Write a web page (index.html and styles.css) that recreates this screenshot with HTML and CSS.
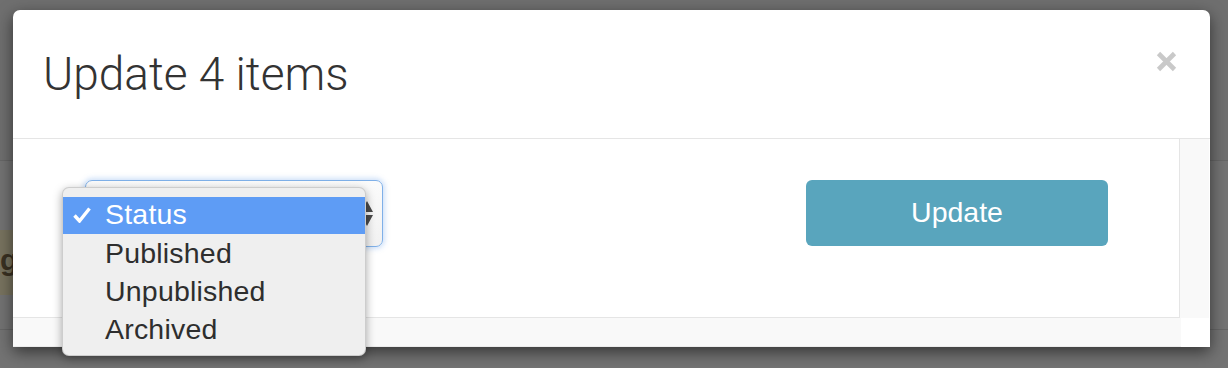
FILE: index.html
```html
<!DOCTYPE html>
<html>
<head>
<meta charset="utf-8">
<link rel="stylesheet" href="styles.css">
</head>
<body>
<div class="page">
  <div class="page-top"></div>
  <div class="page-mid"><span class="tag">g</span></div>
  <div class="page-low"></div>
</div>

<div class="modal">
  <div class="modal-header">
    <h4 class="modal-title">Update 4 items</h4>
    <button class="close" aria-label="Close">
      <svg width="21" height="21" viewBox="0 0 21 21"><path d="M2.5 2.5 L18.5 18.5 M18.5 2.5 L2.5 18.5" stroke="#c9c9c9" stroke-width="4.6" stroke-linecap="butt"/></svg>
    </button>
  </div>
  <div class="modal-body">
    <div class="body-main">
      <div class="select">
        <span class="select-arrows">
          <svg width="12" height="26" viewBox="0 0 12 26"><path d="M6 0 L12 11 L0 11 Z M0 14 L12 14 L6 25 Z" fill="#4a4a4a"/></svg>
        </span>
      </div>
      <button class="btn-update">Update</button>
    </div>
    <div class="body-side"></div>
  </div>
  <div class="modal-footer">
    <div class="footer-main"></div>
    <div class="footer-side"></div>
  </div>
</div>

<ul class="menu">
  <li class="item selected"><span class="check"><svg width="18" height="16" viewBox="0 0 18 16"><path d="M1.5 8.5 L6.5 14 L16.5 1.5" fill="none" stroke="#ffffff" stroke-width="3.4" stroke-linejoin="miter"/></svg></span>Status</li>
  <li class="item"><span class="check"></span>Published</li>
  <li class="item"><span class="check"></span>Unpublished</li>
  <li class="item"><span class="check"></span>Archived</li>
</ul>
</body>
</html>
```

FILE: styles.css
```css
html, body {
  margin: 0;
  padding: 0;
}
body {
  width: 1228px;
  height: 368px;
  overflow: hidden;
  background: #737373;
  font-family: "Liberation Sans", Arial, sans-serif;
  position: relative;
}

/* underlying page seen through the backdrop */
.page {
  display: flex;
  flex-direction: column;
}
.page-top {
  height: 160px;
  background: #6f6f6f;
  border-bottom: 1px solid #666666;
}
.page-mid {
  height: 65px;
  margin-top: 69px;
  width: 60px;
  background: #78735f;
  display: flex;
  align-items: center;
}
.tag {
  font-weight: bold;
  font-size: 30px;
  color: #3a3122;
  margin-left: 0;
  margin-top: -6px;
}
.page-low {
  margin-top: 34px;
  height: 1px;
  background: #666666;
}

/* modal */
.modal {
  position: absolute;
  left: 13px;
  top: 10px;
  width: 1197px;
  height: 337px;
  background: #ffffff;
  border-radius: 7px 7px 0 0;
  box-shadow: 0 5px 16px rgba(0, 0, 0, 0.55);
  display: flex;
  flex-direction: column;
}
.modal-header {
  border-bottom: 1px solid #e5e5e5;
  display: flex;
  align-items: center;
  justify-content: space-between;
  padding: 0 33px 0 30px;
  box-sizing: border-box;
  height: 129px;
}
.modal-title {
  margin: 0;
  font-family: Roboto, "Liberation Sans", sans-serif;
  font-weight: 300;
  font-size: 46px;
  color: #333333;
  letter-spacing: 0;
}
.close {
  align-self: flex-start;
  margin-top: 41px;
  padding: 0;
  border: 0;
  background: none;
  width: 21px;
  height: 21px;
  display: block;
}
.close svg { display: block; }

.modal-body {
  display: flex;
  height: 179px;
}
.body-main {
  width: 1167px;
  border-right: 1px solid #e5e5e5;
  border-bottom: 1px solid #e5e5e5;
  display: flex;
  align-items: flex-start;
  padding: 41px 0 0 72px;
  box-sizing: border-box;
}
.body-side {
  width: 29px;
  background: #f9f9f9;
}
.select {
  width: 298px;
  height: 67px;
  box-sizing: border-box;
  border: 1.5px solid #7fb0e8;
  border-radius: 7px;
  background: linear-gradient(#fbfbfb, #f1f1f1);
  box-shadow: 0 0 5px 2px rgba(120, 170, 235, 0.35);
  display: flex;
  align-items: center;
  justify-content: flex-end;
  padding-right: 9px;
}
.select-arrows svg { display: block; }
.btn-update {
  margin-left: 423px;
  width: 302px;
  height: 66px;
  border: 0;
  border-radius: 6px;
  background: #59a5bd;
  color: #ffffff;
  font-family: "Liberation Sans", Arial, sans-serif;
  font-size: 28.5px;
  padding: 0 0 2px 0;
}

.modal-footer {
  display: flex;
  flex: 1;
}
.footer-main {
  width: 1168px;
  background: #f9f9f9;
  border-bottom: 1px solid #ececec;
}
.footer-side {
  flex: 1;
  background: #ffffff;
}

/* native dropdown menu */
.menu {
  position: absolute;
  left: 62px;
  top: 187px;
  width: 304px;
  height: 169px;
  box-sizing: border-box;
  margin: 0;
  padding: 9px 0 7px 0;
  list-style: none;
  background: #efefef;
  border: 1px solid rgba(0, 0, 0, 0.14);
  border-radius: 7px;
  box-shadow: 0 3px 10px rgba(0, 0, 0, 0.35);
}
.item {
  height: 38px;
  display: flex;
  align-items: center;
  font-family: "Liberation Sans", Arial, sans-serif;
  font-size: 28.5px;
  letter-spacing: 0.2px;
  color: #2e2e2e;
  padding-bottom: 2px;
  box-sizing: border-box;
}
.item.selected {
  background: #5e9cf5;
  color: #ffffff;
  height: 37px;
  margin-bottom: 1px;
}
.check {
  width: 42px;
  flex: none;
  display: flex;
  padding-left: 10px;
  box-sizing: border-box;
}
.check svg { display: block; }
```
